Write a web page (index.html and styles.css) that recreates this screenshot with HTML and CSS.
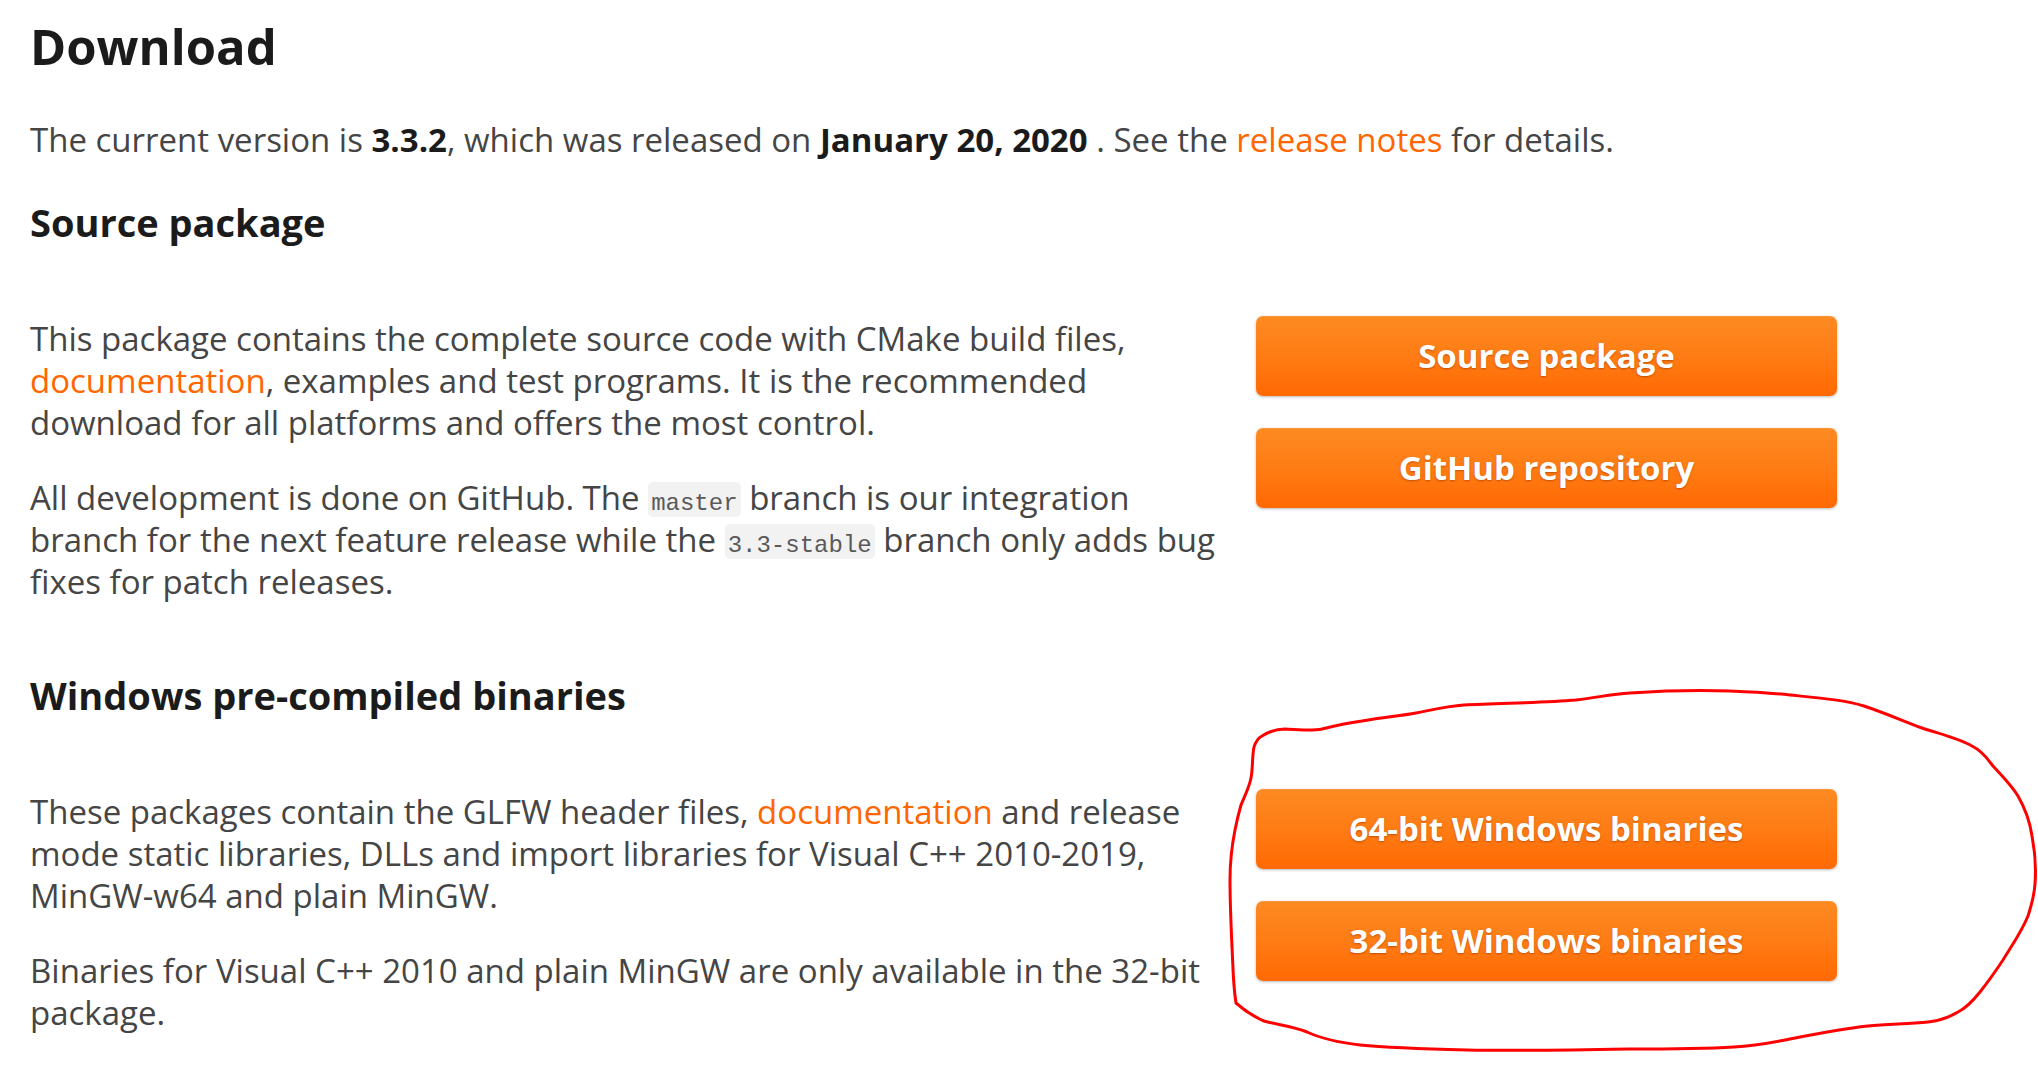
FILE: index.html
```html
<!DOCTYPE html>
<html lang="en">
<head>
<meta charset="utf-8">
<title>Download</title>
<link rel="stylesheet" href="styles.css">
</head>
<body>
<main class="page">
  <h1 class="title">Download</h1>
  <p class="intro">The current version is <strong>3.3.2</strong>, which was released on <strong>January 20, 2020</strong> . See the <a href="#" class="link">release notes</a> for details.</p>

  <section class="section">
    <h2 class="section-title">Source package</h2>
    <div class="row">
      <div class="text-col">
        <p>This package contains the complete source code with CMake build files, <a href="#" class="link">documentation</a>, examples and test programs. It is the recommended download for all platforms and offers the most control.</p>
        <p>All development is done on GitHub. The <code class="code">master</code> branch is our integration branch for the next feature release while the <code class="code">3.3-stable</code> branch only adds bug fixes for patch releases.</p>
      </div>
      <div class="button-col">
        <a href="#" class="btn">Source package</a>
        <a href="#" class="btn">GitHub repository</a>
      </div>
    </div>
  </section>

  <section class="section">
    <h2 class="section-title">Windows pre-compiled binaries</h2>
    <div class="row">
      <div class="text-col">
        <p>These packages contain the GLFW header files, <a href="#" class="link">documentation</a> and release mode static libraries, DLLs and import libraries for Visual C++ 2010-2019, MinGW-w64 and plain MinGW.</p>
        <p>Binaries for Visual C++ 2010 and plain MinGW are only available in the 32-bit package.</p>
      </div>
      <div class="button-col">
        <a href="#" class="btn">64-bit Windows binaries</a>
        <a href="#" class="btn">32-bit Windows binaries</a>
      </div>
    </div>
  </section>
</main>

<svg class="annotation" width="2038" height="1086" viewBox="0 0 2038 1086" aria-hidden="true">
  <path d="M1285 729 C1300 730 1312 731 1322 729 C1338 725 1348 723 1362 721 C1385 717 1400 716 1416 713 C1436 709 1448 706 1464 705 C1500 703 1540 703 1576 700 C1600 697 1612 694 1630 693 C1660 691 1700 690 1730 691 C1755 692 1772 693 1790 695 C1820 698 1845 700 1864 706 C1888 714 1905 722 1922 728 C1940 734 1958 738 1972 746 C1984 752 1988 760 1993 766 C2004 778 2012 786 2018 796 C2026 810 2030 822 2032 836 C2036 856 2036 870 2035 884 C2034 898 2031 906 2028 916 C2020 935 2010 948 2003 960 C1995 972 1988 982 1980 992 C1972 1002 1966 1008 1958 1012 C1948 1018 1938 1021 1928 1022 C1908 1024 1888 1024 1868 1026 C1840 1029 1815 1034 1790 1039 C1770 1043 1752 1046 1734 1047 C1700 1049 1665 1049 1628 1049 C1575 1050 1520 1051 1467 1050 C1425 1049 1390 1048 1360 1045 C1335 1042 1320 1038 1307 1032 C1292 1026 1278 1025 1264 1021 C1252 1016 1244 1010 1236 1003 C1233 985 1233 965 1232 947 C1231 925 1230 900 1230 880 C1230 860 1232 845 1235 830 C1237 820 1239 812 1241 805 C1245 795 1249 788 1251 778 C1253 768 1252 756 1254 747 C1256 741 1258 738 1262 736 C1270 731 1276 729 1285 729 Z" />
</svg>
</body>
</html>
```

FILE: styles.css
```css
html, body {
  margin: 0;
  padding: 0;
  background: #ffffff;
  overflow: hidden;
}

body {
  position: relative;
  width: 2038px;
  height: 1086px;
  font-family: "Open Sans", "Noto Sans", sans-serif;
  font-size: 33px;
  line-height: 42px;
  color: #454545;
}

.page {
  padding: 0 0 0 30px;
  width: 1807px;
}

.title {
  margin: 19px 0 46px;
  font-size: 49px;
  line-height: 54px;
  font-weight: 700;
  color: #1b1b1b;
}

.intro {
  margin: 0;
}

.intro strong {
  font-weight: 700;
  color: #1b1b1b;
}

.link {
  color: #ff6600;
  text-decoration: none;
}

.section-title {
  margin: 41px 0 72px;
  font-size: 38px;
  line-height: 41.8px;
  font-weight: 700;
  color: #1b1b1b;
}

.row {
  display: grid;
  grid-template-columns: 1196px 581px;
  column-gap: 30px;
  align-items: start;
}

.text-col {
  padding-top: 2px;
}

.text-col p {
  margin: 0 0 33px;
}

.text-col p:last-child {
  margin-bottom: 31px;
}

.code {
  font-family: "Liberation Mono", "DejaVu Sans Mono", monospace;
  font-size: 24px;
  line-height: 1;
  color: #5a5a5a;
  background: #f2f2f2;
  border-radius: 5px;
  padding: 8px 3px 0;
}

.button-col {
  display: flex;
  flex-direction: column;
  gap: 32px;
}

.btn {
  display: flex;
  align-items: center;
  justify-content: center;
  height: 80px;
  border-radius: 7px;
  background: linear-gradient(180deg, #fd8a22 0%, #ff7c14 50%, #ff6904 100%);
  box-shadow: 0 1px 3px rgba(0, 0, 0, 0.28), inset 0 1px 0 rgba(255, 170, 90, 0.35);
  color: #ffffff;
  font-size: 33px;
  font-weight: 700;
  text-decoration: none;
  text-shadow: 0 1px 2px rgba(140, 50, 0, 0.55);
}

.annotation {
  position: absolute;
  top: 0;
  left: 0;
  pointer-events: none;
  fill: none;
  stroke: #ff0000;
  stroke-width: 3;
  stroke-linejoin: round;
  stroke-linecap: round;
}
```
